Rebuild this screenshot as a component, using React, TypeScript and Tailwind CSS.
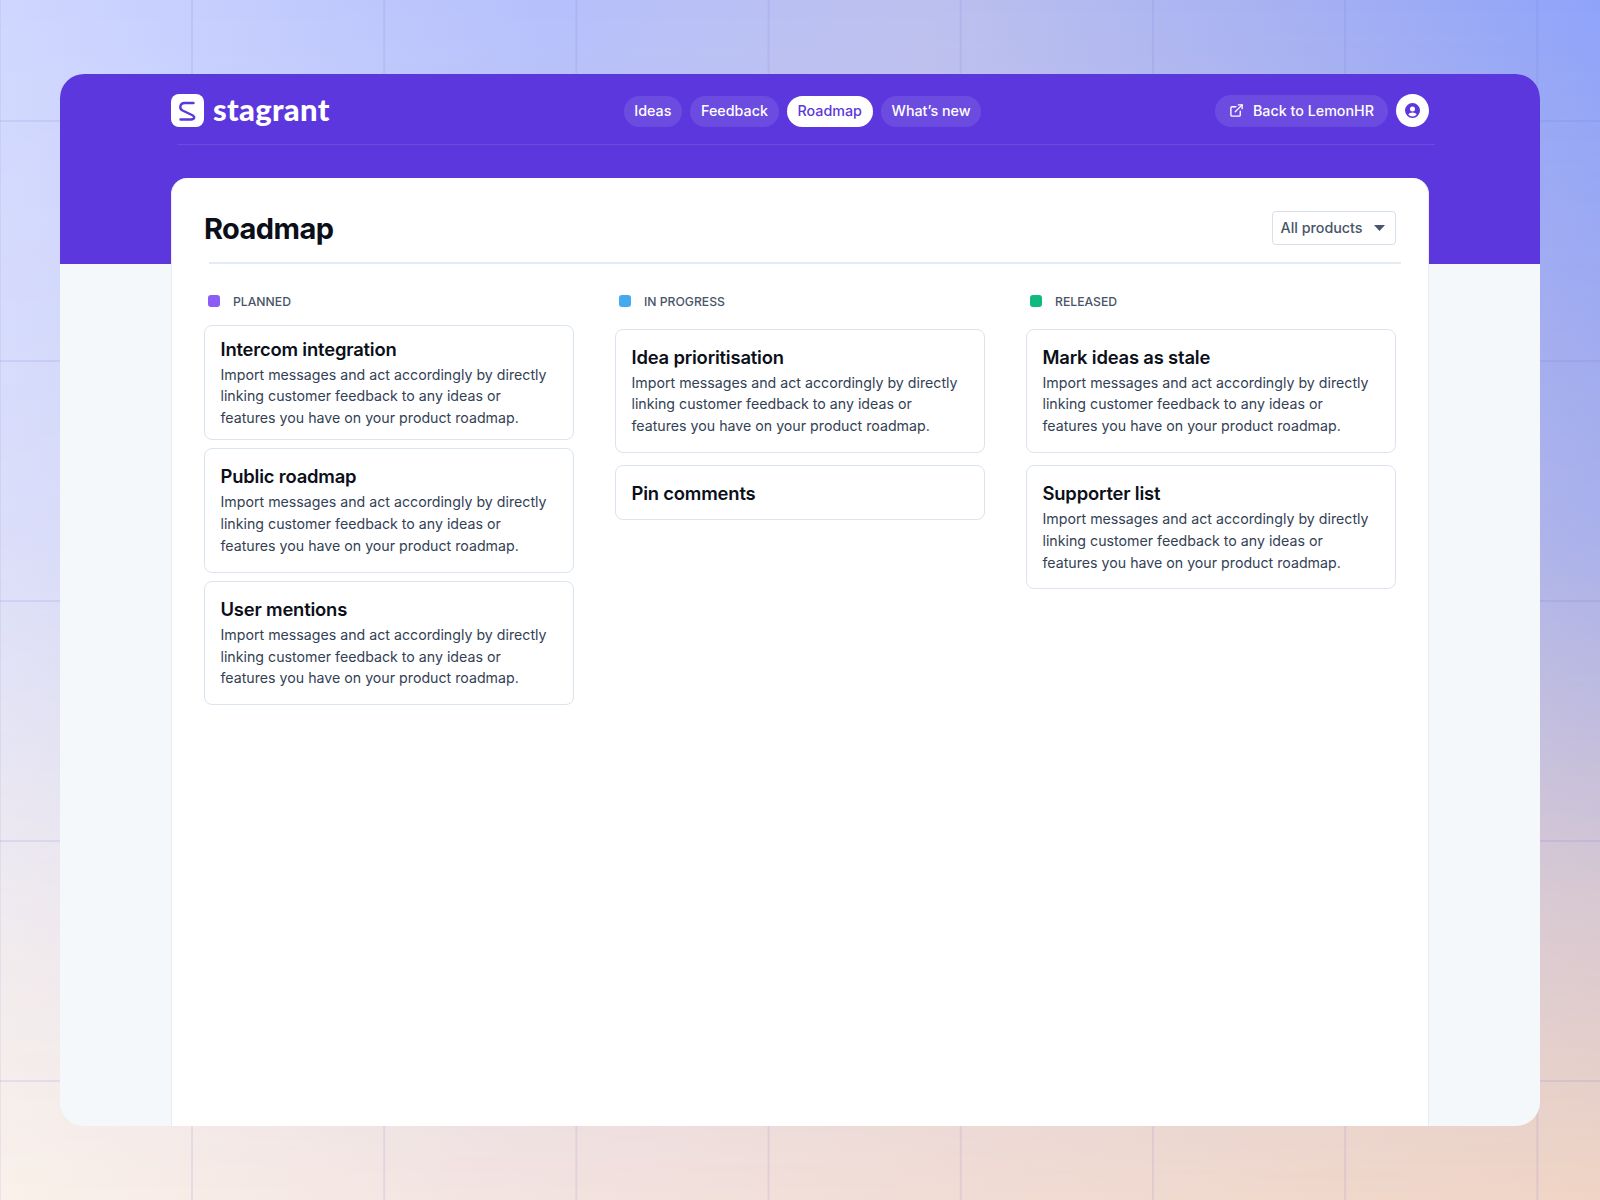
import { ExternalLink } from "lucide-react";

const desc = "Import messages and act accordingly by directly linking customer feedback to any ideas or features you have on your product roadmap.";

function Card({ title, body = true, cls }: { title: string; body?: boolean; cls: string }) {
  return (
    <div className={"rounded-lg border-[1.5px] border-[#dbe4ee] bg-white px-[15px] " + cls}>
      <div className="pl-[0.5px]">
        <h3 className="text-[18.4px] leading-[24px] font-semibold text-[#0b0f19] tracking-[-0.01em]">{title}</h3>
        {body && <p className="mt-[3px] text-[14.2px] leading-[21.8px] text-[#334155]">{desc}</p>}
      </div>
    </div>
  );
}

function ColumnHead({ color, label, cls }: { color: string; label: string; cls: string }) {
  return (
    <div className={"flex items-center gap-[13px] pl-1 h-[12px] " + cls}>
      <span className={"w-3 h-3 rounded-[3px] " + color} />
      <span className="mt-[2px] text-[12.2px] font-medium text-[#475569]">{label}</span>
    </div>
  );
}

export default function App() {
  return (
    <div className="relative w-[1600px] h-[1200px] overflow-hidden pt-[74px] pl-[60px] font-['Inter',sans-serif] bg-[linear-gradient(to_right,#faf1ea_0%,#f3e4e1_30%,#f1dcd5_60%,#f0d5c5_100%)]">
      <div className="absolute inset-0 bg-[linear-gradient(to_right,#cfd7ff_0%,#b6c0fb_34%,#bcc0ee_58%,#a5b0f3_82%,#8fa3f9_100%)] [mask-image:linear-gradient(to_bottom,black_0%,rgb(0_0_0/0.72)_45%,rgb(0_0_0/0.25)_75%,transparent_100%)]" />
      <div className="absolute inset-0 bg-[linear-gradient(to_left,#6d5fd01f_1.6px,transparent_1.6px),linear-gradient(to_bottom,#6d5fd01f_1.6px,transparent_1.6px)] bg-[size:192.2px_240px,192.2px_240px] bg-[position:0.8px_0,0_120px]" />
      <div className="relative w-[1480px] h-[1052px] rounded-3xl overflow-hidden bg-[#f4f8fb]">
        <header className="h-[190px] bg-[#5c37dd] px-[111px] pt-[20px]">
          <div className="flex items-center justify-between h-[33px]">
            <div className="flex items-center gap-[9px] w-[200px]">
              <svg width="33" height="33" viewBox="0 0 33 33" fill="none">
                <rect width="33" height="33" rx="8" fill="#fff" />
                <path d="M22.5 9H13.5C9 9 7.8 14.5 11.5 16.5L21 21C24.5 22.8 23.5 25.5 20 25.5H9.5" stroke="#5c37dd" strokeWidth="2.4" strokeLinecap="round" strokeLinejoin="round" />
              </svg>
              <span className="text-[31px] leading-[33px] font-black text-white font-['Lato',sans-serif] tracking-[0.01em] -mt-[3px]">stagrant</span>
            </div>
            <nav className="flex items-center gap-2 text-[14.3px] font-medium text-white ml-[19px] mt-[1px]">
              <a className="px-[10.8px] h-[31px] flex items-center rounded-full bg-white/10">Ideas</a>
              <a className="px-[10.8px] h-[31px] flex items-center rounded-full bg-white/10">Feedback</a>
              <a className="px-[10.8px] h-[31px] flex items-center rounded-full bg-white text-[#5c37dd]">Roadmap</a>
              <a className="px-[10.8px] h-[31px] flex items-center rounded-full bg-white/10">What’s new</a>
            </nav>
            <div className="flex items-center gap-2">
              <a className="flex items-center gap-[9px] h-[32px] pl-[14px] pr-[14px] rounded-full bg-white/10 text-[14.3px] font-medium text-white">
                <ExternalLink size={15} strokeWidth={2.2} />
                Back to LemonHR
              </a>
              <span className="w-[33px] h-[33px] rounded-full bg-white flex items-center justify-center">
                <svg width="15" height="15" viewBox="0 0 15 15" fill="#5c37dd">
                  <path fillRule="evenodd" d="M7.5 0a7.5 7.5 0 1 1 0 15 7.5 7.5 0 0 1 0-15ZM7.5 3.4a2.5 2.5 0 1 0 0 5 2.5 2.5 0 0 0 0-5ZM3.3 11.6a5.6 5.6 0 0 0 8.4 0c-.6-1.4-2.3-2.2-4.2-2.2s-3.6.8-4.2 2.2Z" />
                </svg>
              </span>
            </div>
          </div>
          <div className="h-px bg-white/10 mt-[17px] ml-[6px] -mr-[6px]" />
        </header>
        <main className="-mt-[86px] ml-[111px] w-[1258px] h-[948px] rounded-t-2xl bg-white border-x border-[#e9edf3] px-8 pt-[33px]">
          <div className="flex items-center justify-between h-[34px]">
            <h1 className="mt-[1px] text-[29px] font-bold text-[#0b0f19] tracking-[-0.02em]">Roadmap</h1>
            <div className="w-[124px] h-[34.5px] rounded-[4px] border-[1.5px] border-[#d5e0ea] flex items-center justify-between pl-[7.5px] pr-[10px]">
              <span className="text-[14.3px] font-medium text-[#475569]">All products</span>
              <svg width="11" height="6" viewBox="0 0 11 6" fill="#475569"><path d="M0 0h11L5.5 6z" /></svg>
            </div>
          </div>
          <div className="h-[1.5px] bg-[#e4ebf2] mt-[17px] ml-[5px] -mr-[5px]" />
          <div className="grid grid-cols-[370px_370px_370px] gap-x-[41px] mt-[31.5px]">
            <div>
              <ColumnHead color="bg-[#8b5cf6]" label="PLANNED" cls="mb-[18px]" />
              <div className="flex flex-col gap-2">
                <Card title="Intercom integration" cls="py-[10.5px]" />
                <Card title="Public roadmap" cls="py-[15px]" />
                <Card title="User mentions" cls="py-[15px]" />
              </div>
            </div>
            <div>
              <ColumnHead color="bg-[#46aaf0]" label="IN PROGRESS" cls="mb-[22px]" />
              <div className="flex flex-col gap-[12.5px]">
                <Card title="Idea prioritisation" cls="py-[14.7px]" />
                <Card title="Pin comments" body={false} cls="py-[14.5px]" />
              </div>
            </div>
            <div>
              <ColumnHead color="bg-[#10b981]" label="RELEASED" cls="mb-[22px]" />
              <div className="flex flex-col gap-[12.5px]">
                <Card title="Mark ideas as stale" cls="py-[14.7px]" />
                <Card title="Supporter list" cls="py-[14.7px]" />
              </div>
            </div>
          </div>
        </main>
      </div>
    </div>
  );
}
